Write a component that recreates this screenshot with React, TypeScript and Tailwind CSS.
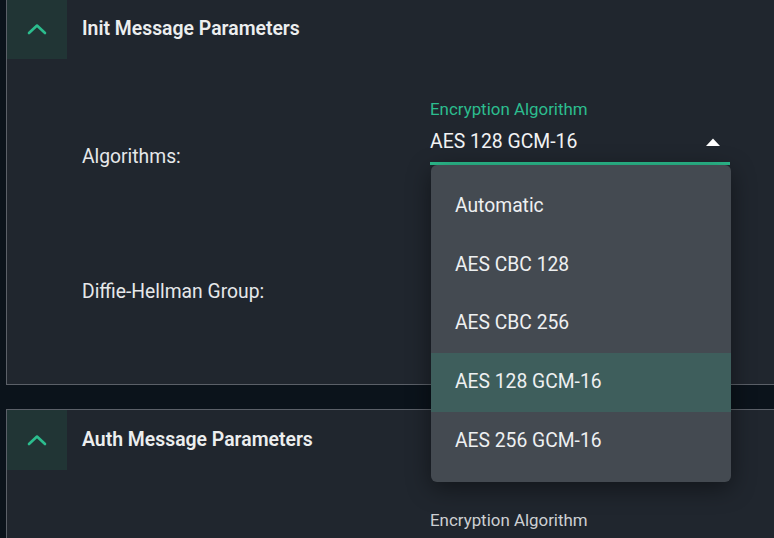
import React from "react";

const items = ["Automatic", "AES CBC 128", "AES CBC 256", "AES 128 GCM-16", "AES 256 GCM-16"];

function Chevron() {
  return (
    <svg width="20" height="12" viewBox="0 0 20 12" fill="none">
      <path d="M2 10 L10 2.5 L18 10" stroke="#2cbd8e" strokeWidth="2.6" strokeLinecap="round" strokeLinejoin="round" />
    </svg>
  );
}

function Header({ title }: { title: string }) {
  return (
    <div className="flex items-center h-[60px]">
      <div className="w-[60px] h-[60px] bg-[#213535] flex items-center justify-center">
        <Chevron />
      </div>
      <div className="ml-[15px] text-[19.4px] font-semibold text-[#eceeef] leading-none -mt-[1px]">{title}</div>
    </div>
  );
}

export default function App() {
  return (
    <div
      className="w-[774px] h-[538px] overflow-hidden bg-[#0b131b] pl-[6px]"
      style={{ fontFamily: "Roboto, 'Liberation Sans', sans-serif" }}
    >
      <div className="w-[900px] -mt-[2px] border border-[#5b6068] bg-[#20262e] h-[387px] relative">
        <Header title="Init Message Parameters" />
        <div className="pl-[75px] pt-[42px]">
          <div className="flex items-end h-[64px]">
            <div className="w-[348px] text-[19.3px] leading-[24px] text-[#e6e8ea] -mb-[4px]">Algorithms:</div>
            <div className="w-[300px] relative">
              <div className="text-[16.9px] leading-[16px] h-[16px] text-[#2cbd8e]">Encryption Algorithm</div>
              <div className="flex items-center justify-between h-[45px] pt-[5px] pr-[10px]">
                <span className="text-[19.4px] leading-none text-[#f2f3f4]">AES 128 GCM-16</span>
                <svg width="14" height="8" viewBox="0 0 14 8">
                  <path d="M0 8 L7 0.5 L14 8 Z" fill="#ffffff" />
                </svg>
              </div>
              <div className="h-[3px] bg-[#2cbd8e]" />
              <div className="absolute left-[1px] top-[64px] w-[300px] bg-[#444a51] rounded-[6px] pt-[12px] pb-[12px] shadow-[0_6px_24px_rgba(0,0,0,0.45)] z-10">
                {items.map((it) => (
                  <div
                    key={it}
                    className={
                      "h-[58.7px] flex items-center pl-[24px] text-[19.3px] text-[#eef0f1] " +
                      (it === "AES 128 GCM-16" ? "bg-[#3e5e5c]" : "")
                    }
                  >
                    {it}
                  </div>
                ))}
              </div>
            </div>
          </div>
          <div className="flex items-end h-[64px] mt-[71px]">
            <div className="w-[348px] text-[19.3px] leading-[24px] text-[#e6e8ea] -mb-[4px]">Diffie-Hellman Group:</div>
            <div className="w-[300px]" />
          </div>
        </div>
      </div>
      <div className="w-[900px] mt-[24px] border border-[#5b6068] bg-[#20262e] h-[200px]">
        <Header title="Auth Message Parameters" />
        <div className="pl-[423px] pt-[40px]">
          <div className="text-[16.9px] leading-[20px] text-[#cdd0d3]">Encryption Algorithm</div>
        </div>
      </div>
    </div>
  );
}
